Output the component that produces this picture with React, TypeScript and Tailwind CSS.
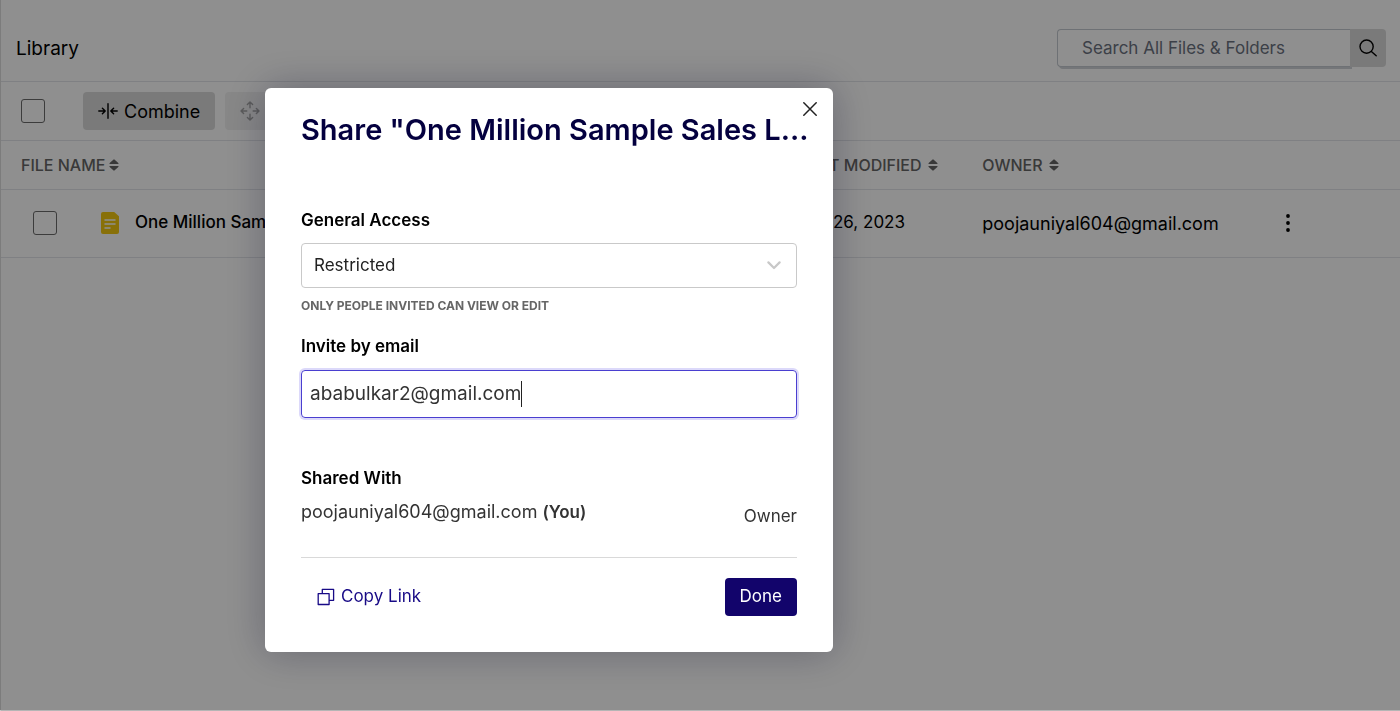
import React, { useState } from 'react';

const owner = 'poojauniyal604@gmail.com';

const SortIcon = () => (
  <svg width="10" height="12" viewBox="0 0 10 12" fill="currentColor" aria-hidden="true">
    <path d="M4.3.7.7 4c-.5.5-.2 1.1.4 1.1h7.8c.6 0 .9-.6.4-1.1L5.7.7a1 1 0 0 0-1.4 0ZM4.3 11.3.7 8c-.5-.5-.2-1.1.4-1.1h7.8c.6 0 .9.6.4 1.1l-3.6 3.3a1 1 0 0 1-1.4 0Z" />
  </svg>
);

const CombineIcon = () => (
  <svg width="20" height="16" viewBox="0 0 20 16" fill="none" stroke="currentColor" strokeWidth="1.4" strokeLinecap="round" strokeLinejoin="round" aria-hidden="true">
    <path d="M10 .8v14.4M.8 8H7M4.4 5.2 7.2 8l-2.8 2.8M19.2 8H13M15.6 5.2 12.8 8l2.8 2.8" />
  </svg>
);

const MoveIcon = () => (
  <svg width="20" height="20" viewBox="0 0 20 20" fill="none" stroke="currentColor" strokeWidth="1.4" strokeLinecap="round" strokeLinejoin="round" aria-hidden="true">
    <path d="M10 1.2v5.6M7.4 3.6 10 1l2.6 2.6M10 18.8v-5.6M7.4 16.4 10 19l2.6-2.6M1.2 10h5.6M3.6 7.4 1 10l2.6 2.6M18.8 10h-5.6M16.4 7.4 19 10l-2.6 2.6" />
  </svg>
);

const FileIcon = () => (
  <svg width="18" height="22" viewBox="0 0 18 22" aria-hidden="true">
    <path d="M2 0h11.2L18 4.2V20a2 2 0 0 1-2 2H2a2 2 0 0 1-2-2V2a2 2 0 0 1 2-2Z" fill="#f2c811" />
    <path d="M4 8h10M4 12h10M4 16h5" stroke="#fff" strokeWidth="1.5" strokeLinecap="round" />
  </svg>
);

const SearchIcon = () => (
  <svg width="18" height="18" viewBox="0 0 18 18" fill="none" stroke="currentColor" strokeWidth="1.4" strokeLinecap="round" aria-hidden="true">
    <circle cx="7.6" cy="7.6" r="6.6" />
    <path d="m12.4 12.4 4.8 4.4" />
  </svg>
);

const CopyIcon = () => (
  <svg width="18" height="18" viewBox="0 0 18 18" fill="none" stroke="currentColor" strokeWidth="1.3" strokeLinejoin="round" aria-hidden="true">
    <path d="M1.2 5.6h10.9v10.9H1.2zM5.3 5.6V1.3h11.3v11h-4.5" />
  </svg>
);

const checkboxClass =
  'block h-6 w-6 shrink-0 appearance-none rounded-[3px] border border-[#6b6b6b] bg-white checked:bg-[#12046b]';

const Library = () => (
  <main className="min-h-screen border-b border-l border-b-[#b5b5b5] border-l-[#dedede] bg-white text-black">
    <header className="flex h-[82px] items-center justify-between border-b border-[#e3e5e9] pt-3.5 pr-3.5 pl-[15px]">
      <h1 className="pt-1 text-[19px]">Library</h1>
      <form className="flex" onSubmit={(e) => e.preventDefault()}>
        <input
          type="search"
          aria-label="Search All Files & Folders"
          placeholder="Search All Files & Folders"
          className="h-[38px] w-[293px] rounded-l border border-r-0 border-[#c5cad0] bg-white pl-6 text-[17px] shadow-[2px_2px_0_#cfd2d8] outline-none placeholder:text-[#6b7280]"
        />
        <button type="submit" aria-label="Search" className="flex h-[38px] w-9 items-center justify-center rounded-r bg-[#dadada]">
          <SearchIcon />
        </button>
      </form>
    </header>

    <div className="flex h-[59px] items-center gap-2.5 border-b border-[#e3e5e9] pl-5">
      <input type="checkbox" aria-label="Select all files" className={`${checkboxClass} mr-7`} />
      <button className="flex h-[38px] items-center gap-1.5 rounded bg-[#dadada] px-[15px] text-[18px]">
        <CombineIcon />
        Combine
      </button>
      <button disabled className="flex h-[38px] w-28 items-center rounded bg-[#f1f1f1] px-[15px] text-[#a3a3a3]" aria-label="Move">
        <MoveIcon />
      </button>
    </div>

    <table className="w-full table-fixed text-left">
      <thead>
        <tr className="h-[48px] border-b border-[#e3e5e9] text-[16px] text-[#666]">
          <th className="w-[57%] pl-5 font-medium">
            <button className="flex items-center gap-1">FILE NAME <SortIcon /></button>
          </th>
          <th className="w-[13%] font-medium">
            <button className="flex items-center gap-1.5">LAST MODIFIED <SortIcon /></button>
          </th>
          <th className="pl-0.5 font-medium">
            <button className="flex items-center gap-1.5">OWNER <SortIcon /></button>
          </th>
          <th className="w-[9%]" />
        </tr>
      </thead>
      <tbody>
        <tr className="h-[68px] border-b border-[#e3e5e9] text-[17px]">
          <td className="pl-8">
            <div className="flex items-center">
              <input type="checkbox" id="file-1" className={checkboxClass} />
              <span className="mr-4 ml-11"><FileIcon /></span>
              <label htmlFor="file-1" className="font-medium">One Million Sample</label>
            </div>
          </td>
          <td>Jun 26, 2023</td>
          <td className="pl-0.5 text-[18px]">{owner}</td>
          <td>
            <button aria-label="More actions" className="flex h-6 w-7 items-center justify-center">
              <svg width="4" height="18" viewBox="0 0 4 18" fill="currentColor" aria-hidden="true">
                <circle cx="2" cy="2" r="1.9" />
                <circle cx="2" cy="9" r="1.9" />
                <circle cx="2" cy="16" r="1.9" />
              </svg>
            </button>
          </td>
        </tr>
      </tbody>
    </table>
  </main>
);

const ShareDialog = () => {
  const [email, setEmail] = useState('ababulkar2@gmail.com');

  return (
    <div
      role="dialog"
      aria-modal="true"
      aria-labelledby="share-title"
      className="relative w-[568px] rounded-md bg-white px-9 pt-6 pb-9 text-[17px] text-black shadow-[0_0_40px_rgba(10,10,40,0.3)]"
    >
      <button aria-label="Close" className="absolute top-3 right-3.5 p-0.5 text-[#222]">
        <svg width="14" height="14" viewBox="0 0 14 14" stroke="currentColor" strokeWidth="1.5" strokeLinecap="round" aria-hidden="true">
          <path d="m.8.8 12.4 12.4M13.2.8.8 13.2" />
        </svg>
      </button>
      <h2 id="share-title" className="text-[29px] leading-9 font-semibold whitespace-nowrap text-[#04003f]">
        Share "One Million Sample Sales L...
      </h2>

      <label htmlFor="access" className="mt-15 block leading-6 font-semibold">General Access</label>
      <div className="relative mt-[11px]">
        <select id="access" className="h-[45px] w-full appearance-none rounded border border-[#c9c9c9] bg-white px-3 text-[#222]">
          <option>Restricted</option>
          <option>Anyone with the link</option>
        </select>
        <svg className="pointer-events-none absolute top-[18px] right-4" width="14" height="9" viewBox="0 0 14 9" fill="none" stroke="#c8c8c8" strokeWidth="2.2" strokeLinecap="round" strokeLinejoin="round" aria-hidden="true">
          <path d="m1.4 1.4 5.6 5.6 5.6-5.6" />
        </svg>
      </div>
      <p className="mt-2 text-[12px] leading-5 font-bold text-[#666]">ONLY PEOPLE INVITED CAN VIEW OR EDIT</p>

      <label htmlFor="invite" className="mt-[18px] block leading-6 font-semibold">Invite by email</label>
      <div className="mt-3 flex h-12 items-center rounded border border-[#4a3fd0] px-2 ring-2 ring-[#dcd9fa]">
        <input
          id="invite"
          type="email"
          value={email}
          onChange={(e) => setEmail(e.target.value)}
          className="field-sizing-content max-w-full text-[19px] text-[#333] outline-none"
        />
        <span className="h-[26px] w-px bg-[#222]" />
      </div>

      <h3 className="mt-12 leading-6 font-semibold">Shared With</h3>
      <div className="mt-2.5 flex justify-between border-b border-[#d9d9d9] pb-[29px] text-[#333]">
        <p className="text-[18px] leading-6">
          {owner} <b className="text-[17px] font-semibold">(You)</b>
        </p>
        <span className="mt-1 leading-6">Owner</span>
      </div>

      <div className="mt-5 flex items-center justify-between">
        <button className="flex items-center gap-1.5 pl-4 text-[#180a86]">
          <CopyIcon />
          Copy Link
        </button>
        <button className="h-[38px] rounded bg-[#12046b] px-[15px] text-white">Done</button>
      </div>
    </div>
  );
};

const App = () => (
  <div className="font-['Inter',sans-serif]">
    <Library />
    <div className="fixed inset-x-0 top-0 bottom-px flex items-start bg-black/44 pt-22 pl-[265px]">
      <ShareDialog />
    </div>
  </div>
);

export default App;
